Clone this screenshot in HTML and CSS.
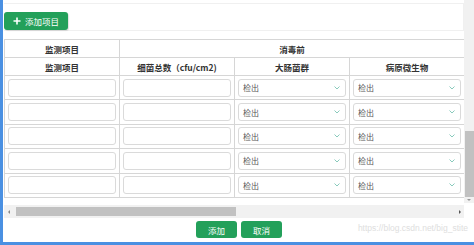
FILE: index.html
```html
<!DOCTYPE html>
<html lang="zh-CN">
<head>
  <meta charset="UTF-8">
  <title>监测项目</title>
  <link rel="stylesheet" href="styles.css">
</head>
<body>
  <div class="page">
    <div class="top">
      <div class="content">
        <div class="toolbar">
          <button class="btn btn-add-item">
            <svg width="8" height="8" viewBox="0 0 8 8"><path d="M4 0.5v7M0.5 4h7" stroke="#fff" stroke-width="1.6"/></svg>
            添加项目
          </button>
        </div>
        <table class="grid">
          <colgroup>
            <col class="c"><col class="c"><col class="c"><col class="c">
          </colgroup>
          <thead>
            <tr><th>监测项目</th><th colspan="3">消毒前</th></tr>
            <tr><th>监测项目</th><th>细菌总数（cfu/cm2)</th><th>大肠菌群</th><th>病原微生物</th></tr>
          </thead>
          <tbody id="rows"></tbody>
        </table>
      </div>
      <div class="vbar">
        <div class="vthumb"></div>
        <div class="arrow-down"></div>
      </div>
    </div>
    <div class="hbar">
      <div class="arrow-left"></div>
      <div class="hthumb"></div>
      <div class="arrow-right"></div>
    </div>
    <div class="footer">
      <button class="btn btn-foot">添加</button>
      <button class="btn btn-foot">取消</button>
      <span class="watermark">https://blog.csdn.net/big_stite</span>
    </div>
  </div>
  <script>
    // 5行のデータ行を生成
    const tbody = document.getElementById('rows');
    const chevron = '<svg width="6" height="4" viewBox="0 0 6 4"><path d="M0.5 0.5L3 3L5.5 0.5" fill="none" stroke="#7cc4b4" stroke-width="0.9"/></svg>';
    const sel = '<div class="select"><span>检出</span>' + chevron + '</div>';
    for (let i = 0; i < 5; i++) {
      const tr = document.createElement('tr');
      tr.innerHTML =
        '<td><input class="field" type="text"></td>' +
        '<td><input class="field" type="text"></td>' +
        '<td>' + sel + '</td>' +
        '<td>' + sel + '</td>';
      tbody.appendChild(tr);
    }
  </script>
</body>
</html>
```

FILE: styles.css
```css
:root {
  --green:   #23a05a;
  --blue:    #4a90e2;
  --line:    #d6d6d6;
  --field:   #dadada;
  --track:   #f1f1f1;
  --thumb:   #c1c1c1;
  --text:    #333;
}
html, body {
  margin: 0; padding: 0;
  background: #fff;
  font-family: "Noto Sans CJK SC", "Liberation Sans", sans-serif;
  color: var(--text);
}
.page {
  width: 474px; height: 245px;
  box-sizing: border-box;
  border-left: 3px solid var(--blue);
  border-bottom: 3px solid var(--blue);
  padding-left: 1px;
  display: flex; flex-direction: column;
  position: relative;
  overflow: hidden;
}
.top { display: flex; height: 203px; }
.content { flex: 1; min-width: 0; }

.toolbar {
  display: flex; align-items: flex-start;
  margin-top: 3px;
  height: 28px;
  padding-top: 8px;
  box-sizing: border-box;
  border-top: 1px solid #f0f0f0;
  border-right: 1px solid #f0f0f0;
  border-bottom: 1px solid #f0f0f0;
  margin-bottom: 8px;
}
.btn {
  border: none; border-radius: 3px;
  background: var(--green); color: #fff;
  font-family: inherit;
  padding: 0; cursor: pointer;
  display: inline-flex; align-items: center; justify-content: center;
}
.btn-add-item {
  width: 64px; height: 18px;
  font-size: 8.5px; gap: 4px;
  box-shadow: 1px 1px 1px rgba(0,0,0,0.12);
}

.grid {
  width: 460px;
  table-layout: fixed;
  border-collapse: collapse;
  font-size: 8.5px;
}
.grid col.c { width: 115px; }
.grid th {
  height: 17px; padding: 0;
  border: 1px solid var(--line);
  font-weight: bold; color: #333;
  text-align: center;
}
.grid td {
  height: 23.4px; padding: 0 3px;
  border: 1px solid var(--line);
}
.field {
  display: block; width: 100%; height: 18px;
  box-sizing: border-box; margin: 0;
  border: 1px solid var(--field); border-radius: 3px;
  background: #fff;
}
.select {
  height: 18px;
  box-sizing: border-box;
  border: 1px solid var(--field); border-radius: 3px;
  display: flex; align-items: center; justify-content: space-between;
  padding: 0 5px 0 4px;
  font-size: 8px; color: #555;
}

.vbar {
  width: 10px; background: var(--track);
  display: flex; flex-direction: column; justify-content: flex-end;
  align-items: center;
}
.vthumb { width: 9px; height: 66px; background: var(--thumb); margin-bottom: 2px; }
.arrow-down {
  width: 0; height: 0; margin-bottom: 2px;
  border-left: 2px solid transparent; border-right: 2px solid transparent;
  border-top: 2px solid #999;
}

.hbar {
  width: 460px; height: 13px; margin-top: 2px;
  background: var(--track);
  display: flex; align-items: center;
}
.hthumb { width: 220px; height: 9px; background: var(--thumb); margin-left: 6px; }
.arrow-left {
  width: 0; height: 0; margin-left: 4px;
  border-top: 2px solid transparent; border-bottom: 2px solid transparent;
  border-right: 2px solid #888;
}
.arrow-right {
  width: 0; height: 0; margin-left: auto; margin-right: 3px;
  border-top: 2px solid transparent; border-bottom: 2px solid transparent;
  border-left: 2px solid #555;
}

.footer {
  display: flex; justify-content: center; gap: 4px;
  padding-top: 3px;
}
.btn-foot { width: 41px; height: 17px; font-size: 8.5px; }
.watermark {
  position: absolute; right: 6px; bottom: 9px;
  font-family: "Liberation Sans", sans-serif;
  font-size: 8.5px; color: #dedede;
}
```
